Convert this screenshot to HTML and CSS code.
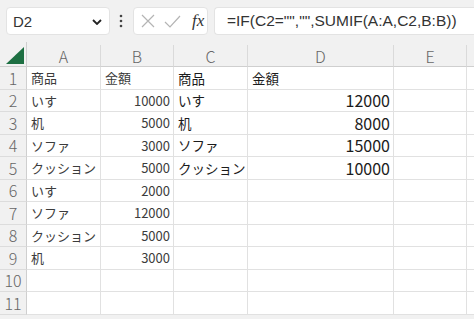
FILE: index.html
```html
<!DOCTYPE html>
<html lang="ja">
<head>
  <meta charset="UTF-8" />
  <title>Book1 - Excel</title>
  <link rel="stylesheet" href="styles.css">
</head>
<body>
  <div class="toolbar">
    <div class="namebox">
      <span>D2</span>
      <svg class="chevron" width="10" height="6" viewBox="0 0 10 6">
        <path d="M1 1l4 4 4-4" fill="none" stroke="#222" stroke-width="1.8"/>
      </svg>
    </div>
    <svg class="grip" width="4" height="14" viewBox="0 0 4 14">
      <circle cx="2" cy="2" r="1.3" fill="#444"/>
      <circle cx="2" cy="7" r="1.3" fill="#444"/>
      <circle cx="2" cy="12" r="1.3" fill="#444"/>
    </svg>
    <div class="fxbox">
      <svg width="14" height="14" viewBox="0 0 14 14">
        <path d="M1 1l12 12M13 1L1 13" stroke="#b4b4b4" stroke-width="1.2"/>
      </svg>
      <svg width="17" height="13" viewBox="0 0 17 13">
        <path d="M1 7l5 5L16 1" fill="none" stroke="#b4b4b4" stroke-width="1.2"/>
      </svg>
      <span class="fx">fx</span>
    </div>
    <div class="formula">=IF(C2="","",SUMIF(A:A,C2,B:B))</div>
  </div>

  <div class="sheet">
    <div class="corner">
      <svg width="27" height="25" viewBox="0 0 27 25">
        <polygon points="6,22 24,22 24,5" fill="#1d6f42"/>
      </svg>
    </div>
    <div class="colhead">A</div>
    <div class="colhead">B</div>
    <div class="colhead">C</div>
    <div class="colhead">D</div>
    <div class="colhead">E</div>
    <div class="colhead"></div>

    <div class="rowhead">1</div>
    <div class="cell">商品</div><div class="cell">金額</div><div class="cell big">商品</div><div class="cell big">金額</div><div class="cell"></div><div class="cell"></div>

    <div class="rowhead">2</div>
    <div class="cell">いす</div><div class="cell num">10000</div><div class="cell big">いす</div><div class="cell num big">12000</div><div class="cell"></div><div class="cell"></div>

    <div class="rowhead">3</div>
    <div class="cell">机</div><div class="cell num">5000</div><div class="cell big">机</div><div class="cell num big">8000</div><div class="cell"></div><div class="cell"></div>

    <div class="rowhead">4</div>
    <div class="cell">ソファ</div><div class="cell num">3000</div><div class="cell big">ソファ</div><div class="cell num big">15000</div><div class="cell"></div><div class="cell"></div>

    <div class="rowhead">5</div>
    <div class="cell">クッション</div><div class="cell num">5000</div><div class="cell big">クッション</div><div class="cell num big">10000</div><div class="cell"></div><div class="cell"></div>

    <div class="rowhead">6</div>
    <div class="cell">いす</div><div class="cell num">2000</div><div class="cell"></div><div class="cell"></div><div class="cell"></div><div class="cell"></div>

    <div class="rowhead">7</div>
    <div class="cell">ソファ</div><div class="cell num">12000</div><div class="cell"></div><div class="cell"></div><div class="cell"></div><div class="cell"></div>

    <div class="rowhead">8</div>
    <div class="cell">クッション</div><div class="cell num">5000</div><div class="cell"></div><div class="cell"></div><div class="cell"></div><div class="cell"></div>

    <div class="rowhead">9</div>
    <div class="cell">机</div><div class="cell num">3000</div><div class="cell"></div><div class="cell"></div><div class="cell"></div><div class="cell"></div>

    <div class="rowhead">10</div>
    <div class="cell"></div><div class="cell"></div><div class="cell"></div><div class="cell"></div><div class="cell"></div><div class="cell"></div>

    <div class="rowhead">11</div>
    <div class="cell"></div><div class="cell"></div><div class="cell"></div><div class="cell"></div><div class="cell"></div><div class="cell"></div>
  </div>
</body>
</html>
```

FILE: styles.css
```css
* {
  margin: 0;
  padding: 0;
  box-sizing: border-box;
}
body {
  width: 474px;
  height: 319px;
  overflow: hidden;
  background-color: #f1f1f1;
  font-family: "Noto Sans CJK JP", sans-serif;
  color: #333;
}

/* formula bar */
.toolbar {
  height: 42px;
  display: flex;
  align-items: flex-start;
  padding: 7px 0 0 6px;
  white-space: nowrap;
}
.namebox {
  width: 104px;
  height: 28px;
  background-color: #fff;
  border: 1px solid #e3e3e3;
  border-radius: 4px;
  display: flex;
  align-items: center;
  justify-content: space-between;
  padding: 0 7px 0 6px;
  font-family: "Liberation Sans", sans-serif;
  font-size: 15px;
  color: #333;
}
.chevron {
  margin-top: 2px;
}
.grip {
  margin: 7px 10px 0 9px;
}
.fxbox {
  width: 75px;
  height: 28px;
  background-color: #fff;
  border: 1px solid #e3e3e3;
  border-radius: 4px;
  display: flex;
  align-items: center;
  gap: 9px;
  padding-left: 7px;
}
.fx {
  font-family: "Liberation Serif", serif;
  font-style: italic;
  font-size: 17px;
  color: #333;
  margin-left: 2px;
}
.formula {
  margin-left: 6px;
  flex: 1;
  height: 28px;
  background-color: #fff;
  border: 1px solid #e3e3e3;
  border-right: none;
  border-radius: 4px 0 0 4px;
  padding-left: 12px;
  line-height: 26px;
  font-family: "Liberation Sans", sans-serif;
  font-size: 15.5px;
  color: #333;
}

/* grid */
.sheet {
  display: grid;
  grid-template-columns: 27px 74px 73px 74px 146px 73px 1fr;
  grid-template-rows: 25px repeat(11, 22.5px);
  background-color: #f1f1f1;
}
.corner {
  border-right: 1px solid #cfcfcf;
  border-bottom: 1px solid #cfcfcf;
}
.corner svg {
  display: block;
}
.colhead {
  margin-top: 3px;
  border-right: 1px solid #dadada;
  border-bottom: 1px solid #cfcfcf;
  display: flex;
  align-items: center;
  justify-content: center;
  font-size: 16px;
  font-weight: 300;
  color: #666;
}
.rowhead {
  background-color: #f1f1f1;
  border-right: 1px solid #cfcfcf;
  border-bottom: 1px solid #dcdcdc;
  display: flex;
  align-items: center;
  justify-content: center;
  font-size: 16px;
  font-weight: 300;
  color: #666;
}
.cell {
  background-color: #fff;
  border-right: 1px solid #e1e1e1;
  border-bottom: 1px solid #e1e1e1;
  display: flex;
  align-items: center;
  padding: 0 3px 0 4px;
  font-size: 13px;
  color: #3c3c3c;
  white-space: nowrap;
}
.cell.num {
  justify-content: flex-end;
}
.cell.big {
  font-size: 13.5px;
  color: #1c1c1c;
}
.cell.num.big {
  font-size: 16px;
}
```
